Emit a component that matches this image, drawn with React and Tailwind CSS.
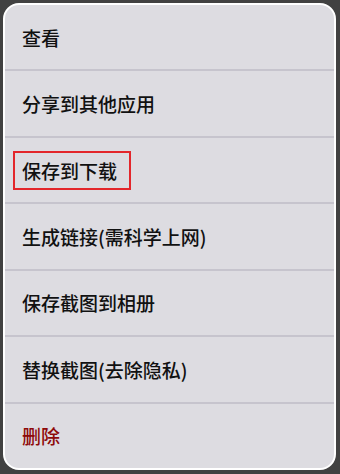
import React from "react";

const items = [
  { t: "查看" },
  { t: "分享到其他应用" },
  { t: "保存到下载", boxed: true },
  { t: "生成链接(需科学上网)" },
  { t: "保存截图到相册" },
  { t: "替换截图(去除隐私)" },
  { t: "删除", red: true },
];

export default function App() {
  return (
    <div className="w-[340px] h-[474px] bg-[#414141] pt-[3px] pl-[3px]" style={{ fontFamily: '"Noto Sans CJK SC", "Noto Sans", sans-serif' }}>
      <div className="w-[333px] h-[467px] rounded-[16px] border-2 border-white bg-[#dddce1] overflow-hidden flex flex-col">
        {items.map((it, i) => (
          <div
            key={i}
            className={`flex-1 flex items-center pl-[17px] ${i < items.length - 1 ? "border-b-2 border-[#c6c4cd]" : ""}`}
          >
            {it.boxed ? (
              <div className="border-2 border-[#e3262b] ml-[-9px] px-[7px] h-[39px] w-[118px] flex items-center">
                <span className="text-[19px] font-medium text-[#111] leading-none">{it.t}</span>
              </div>
            ) : (
              <span className={`text-[19px] font-medium leading-none ${it.red ? "text-[#8e0a0a]" : "text-[#111]"}`}>{it.t}</span>
            )}
          </div>
        ))}
      </div>
    </div>
  );
}
